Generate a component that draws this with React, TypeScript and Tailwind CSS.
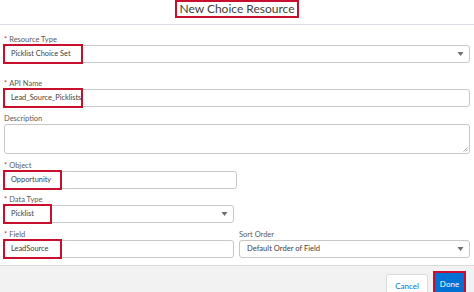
import React from "react";

const RED = "border-[#c8102e]";

function Label({ text, req = true }: { text: string; req?: boolean }) {
  return (
    <div className="h-[11px] flex items-center text-[7.5px] leading-none text-[#5c5a58] whitespace-nowrap">
      {req && <span className="text-[#c23934] mr-[2px]">*</span>}
      {text}
    </div>
  );
}

function Chevron() {
  return (
    <svg width="7" height="5" viewBox="0 0 7 5" className="absolute right-[5px] top-1/2 -translate-y-1/2">
      <path d="M0.5 0.5 L6.5 0.5 L3.5 4.5 Z" fill="#706e6b" />
    </svg>
  );
}

function Field({
  value,
  boxW,
  select = false,
  className = "",
}: {
  value: string;
  boxW?: number;
  select?: boolean;
  className?: string;
}) {
  return (
    <div className={`relative h-[18px] border border-[#c9c7c5] rounded-[3px] bg-white ${className}`}>
      {boxW ? (
        <span
          className={`absolute left-[-2px] top-[-2px] bottom-[-2px] border-2 ${RED} flex items-center pl-[6px] text-[7.4px] text-[#3e3e3c] whitespace-nowrap`}
          style={{ width: boxW }}
        >
          {value}
        </span>
      ) : (
        <span className="absolute left-[7px] top-0 bottom-0 flex items-center text-[7.6px] text-[#3e3e3c] whitespace-nowrap">
          {value}
        </span>
      )}
      {select && <Chevron />}
    </div>
  );
}

export default function App() {
  return (
    <div
      className="w-[474px] h-[292px] bg-white overflow-hidden flex flex-col"
      style={{ fontFamily: 'Lato, "Noto Sans", sans-serif' }}
    >
      <div className="h-[25px] border-b border-[#d8dde6] flex justify-center items-start shrink-0">
        <div className={`h-[18px] w-[124px] border-2 ${RED} flex items-center justify-center text-[12px] leading-none text-[#3e3e3c] whitespace-nowrap`}>
          New Choice Resource
        </div>
      </div>

      <div className="px-[4px] flex flex-col">
        <div className="mt-[9px]">
          <Label text="Resource Type" />
          <Field value="Picklist Choice Set" boxW={80} select />
        </div>
        <div className="mt-[15px]">
          <Label text="API Name" />
          <Field value="Lead_Source_Picklists" boxW={80} />
        </div>
        <div className="mt-[6px]">
          <Label text="Description" req={false} />
          <div className="relative h-[30px] border border-[#c9c7c5] rounded-[3px] bg-white">
            <svg width="5" height="5" viewBox="0 0 5 5" className="absolute right-[1px] bottom-[1px]">
              <path d="M4.5 0.5 L0.5 4.5 M4.5 2.5 L2.5 4.5" stroke="#8a8886" strokeWidth="0.7" />
            </svg>
          </div>
        </div>
        <div className="mt-[6px] w-[233px]">
          <Label text="Object" />
          <Field value="Opportunity" boxW={59} />
        </div>
        <div className="mt-[5px] w-[230px]">
          <Label text="Data Type" />
          <Field value="Picklist" boxW={49} select />
        </div>
        <div className="mt-[6px] flex gap-[5px]">
          <div className="w-[230px]">
            <Label text="Field" />
            <Field value="LeadSource" boxW={59} />
          </div>
          <div className="flex-1">
            <Label text="Sort Order" req={false} />
            <Field value="Default Order of Field" select />
          </div>
        </div>
      </div>

      <div className="mt-[7px] flex-1 bg-[#f3f2f2] border-t border-[#dddbda] flex justify-end items-start pt-[5px] pr-[8px] gap-[5px]">
        <div className="mt-[3px] w-[42px] h-[24px] bg-white border border-[#dddbda] rounded-[3px] flex items-center justify-center text-[8px] text-[#0070d2]">
          Cancel
        </div>
        <div className={`w-[33px] h-[26px] border-2 ${RED} bg-[#0070d2] flex items-center justify-center text-[8px] text-white`}>
          Done
        </div>
      </div>
    </div>
  );
}
